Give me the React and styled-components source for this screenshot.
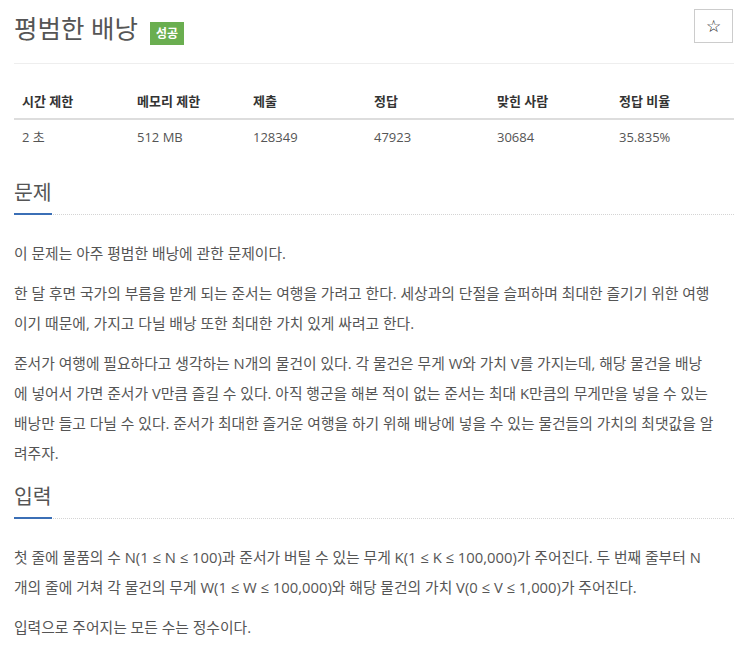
import React from 'react';
import styled, { createGlobalStyle } from 'styled-components';

const FONT = `"Open Sans", "Noto Sans CJK KR", sans-serif`;

const Global = createGlobalStyle`
  html, body { margin: 0; padding: 0; background: #fff; }
  html { overflow-x: hidden; }
  body { font-family: ${FONT}; color: #555; -webkit-font-smoothing: antialiased; }
`;

const Page = styled.main`
  width: 720px;
  margin-left: 14px;
`;

const PageHeader = styled.header`
  display: flex;
  justify-content: space-between;
  align-items: flex-start;
  padding: 9px 0 18px;
  border-bottom: 1px solid #eee;
  margin-bottom: 20px;
`;

const Title = styled.h1`
  display: flex;
  align-items: baseline;
  gap: 12px;
  margin: 2px 0 0;
  font-size: 25.5px;
  line-height: 34px;
  font-weight: 400;
  color: #555;
`;

const TitleText = styled.span``;

const Badge = styled.span`
  display: inline-block;
  padding: 0 6px;
  font-size: 12px;
  line-height: 23px;
  font-weight: 700;
  color: #fff;
  background: #6aae50;
`;

const StarButton = styled.button`
  width: 39px;
  height: 34px;
  margin-right: 1px;
  padding: 0;
  border: 1px solid #ccc;
  border-radius: 0;
  background: #fff;
  color: #222;
  font-family: "DejaVu Sans", sans-serif;
  font-size: 17px;
  line-height: 1;
  cursor: pointer;
`;

const InfoTable = styled.table`
  width: 100%;
  table-layout: fixed;
  border-collapse: separate;
  border-spacing: 0;
  margin-bottom: 20px;
  font-size: 13px;
`;

const Th = styled.th`
  text-align: left;
  padding: 8px;
  line-height: 18px;
  font-weight: 700;
  color: #333;
  border-bottom: 2px solid #ddd;
`;

const Td = styled.td`
  padding: 8px;
  line-height: 18px;
  color: #555;
`;

const Section = styled.section``;

const Headline = styled.div`
  display: flex;
  border-bottom: 1px dotted #d4d4d4;
  margin-bottom: 23px;
`;

const SectionTitle = styled.h2`
  margin: 0 0 -1px;
  padding: 4px 0 7px;
  font-size: 20.5px;
  line-height: 28px;
  font-weight: 400;
  color: #555;
  border-bottom: 2px solid #3b6fb6;
`;

const ProblemText = styled.div`
  font-size: 14.8px;
  line-height: 30px;
  color: #555;
`;

const Para = styled.p`
  margin: 0 0 10px;
  white-space: nowrap;
`;

const cols = [115, 116, 121, 123, 122, 123];
const info = [
  ['시간 제한', '2 초'],
  ['메모리 제한', '512 MB'],
  ['제출', '128349'],
  ['정답', '47923'],
  ['맞힌 사람', '30684'],
  ['정답 비율', '35.835%'],
];

const sections = [
  {
    title: '문제',
    paras: [
      ['이 문제는 아주 평범한 배낭에 관한 문제이다.'],
      [
        '한 달 후면 국가의 부름을 받게 되는 준서는 여행을 가려고 한다. 세상과의 단절을 슬퍼하며 최대한 즐기기 위한 여행',
        '이기 때문에, 가지고 다닐 배낭 또한 최대한 가치 있게 싸려고 한다.',
      ],
      [
        '준서가 여행에 필요하다고 생각하는 N개의 물건이 있다. 각 물건은 무게 W와 가치 V를 가지는데, 해당 물건을 배낭',
        '에 넣어서 가면 준서가 V만큼 즐길 수 있다. 아직 행군을 해본 적이 없는 준서는 최대 K만큼의 무게만을 넣을 수 있는',
        '배낭만 들고 다닐 수 있다. 준서가 최대한 즐거운 여행을 하기 위해 배낭에 넣을 수 있는 물건들의 가치의 최댓값을 알',
        '려주자.',
      ],
    ],
  },
  {
    title: '입력',
    paras: [
      [
        '첫 줄에 물품의 수 N(1 ≤ N ≤ 100)과 준서가 버틸 수 있는 무게 K(1 ≤ K ≤ 100,000)가 주어진다. 두 번째 줄부터 N',
        '개의 줄에 거쳐 각 물건의 무게 W(1 ≤ W ≤ 100,000)와 해당 물건의 가치 V(0 ≤ V ≤ 1,000)가 주어진다.',
      ],
      ['입력으로 주어지는 모든 수는 정수이다.'],
    ],
  },
];

export default function App() {
  return (
    <>
      <Global />
      <Page>
        <PageHeader>
          <Title>
            <TitleText>평범한 배낭</TitleText>
            <Badge>성공</Badge>
          </Title>
          <StarButton type="button" aria-label="즐겨찾기">☆</StarButton>
        </PageHeader>

        <InfoTable>
          <colgroup>
            {cols.map((w, i) => (
              <col key={i} style={{ width: w }} />
            ))}
          </colgroup>
          <thead>
            <tr>
              {info.map(([h]) => (
                <Th key={h}>{h}</Th>
              ))}
            </tr>
          </thead>
          <tbody>
            <tr>
              {info.map(([h, v]) => (
                <Td key={h}>{v}</Td>
              ))}
            </tr>
          </tbody>
        </InfoTable>

        {sections.map((s) => (
          <Section key={s.title}>
            <Headline>
              <SectionTitle>{s.title}</SectionTitle>
            </Headline>
            <ProblemText>
              {s.paras.map((lines, pi) => (
                <Para key={pi}>
                  {lines.map((l, li) => (
                    <React.Fragment key={li}>
                      {li > 0 && <br />}
                      {l}
                    </React.Fragment>
                  ))}
                </Para>
              ))}
            </ProblemText>
          </Section>
        ))}
      </Page>
    </>
  );
}
